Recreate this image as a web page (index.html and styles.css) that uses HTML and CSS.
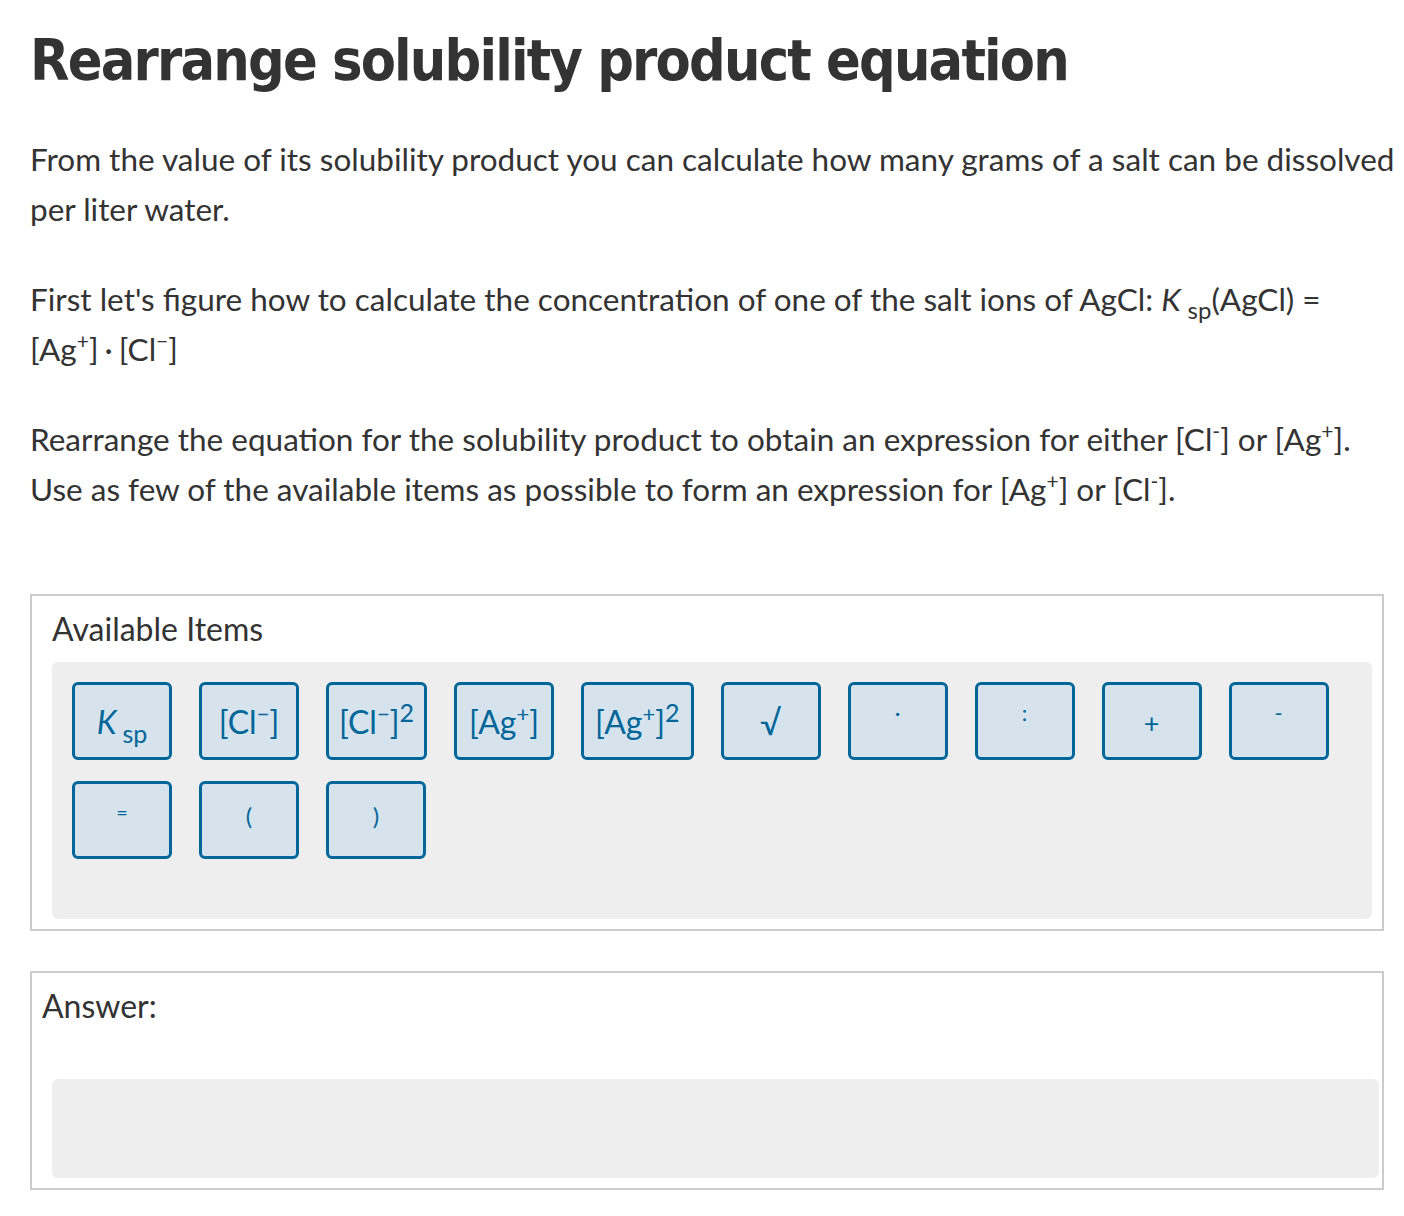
FILE: index.html
```html
<!DOCTYPE html>
<html lang="en">
<head>
<meta charset="utf-8">
<title>Rearrange solubility product equation</title>
<link rel="stylesheet" href="styles.css">
</head>
<body>
<div class="page">
  <h1 class="title">Rearrange solubility product equation</h1>
  <p class="text">From the value of its solubility product you can calculate how many grams of a salt can be dissolved<br>per liter water.</p>
  <p class="text">First let's figure how to calculate the concentration of one of the salt ions of AgCl: <i class="k">K</i><sub class="sp">sp</sub>(AgCl) =<br>[Ag<sup class="sup">+</sup>]<span class="cdot">·</span>[Cl<sup class="sup">−</sup>]</p>
  <p class="text">Rearrange the equation for the solubility product to obtain an expression for either [Cl<sup class="sup">-</sup>] or [Ag<sup class="sup">+</sup>].<br>Use as few of the available items as possible to form an expression for [Ag<sup class="sup">+</sup>] or [Cl<sup class="sup">-</sup>].</p>

  <section class="box items">
    <div class="box-title">Available Items</div>
    <div class="panel">
      <div class="tile"><span class="lbl"><i class="k">K</i><sub class="tsp">sp</sub></span></div>
      <div class="tile"><span class="lbl">[Cl<sup class="tsup">−</sup>]</span></div>
      <div class="tile"><span class="lbl">[Cl<sup class="tsup">−</sup>]<sup class="tpow">2</sup></span></div>
      <div class="tile"><span class="lbl">[Ag<sup class="tsup">+</sup>]</span></div>
      <div class="tile tile-wide"><span class="lbl">[Ag<sup class="tsup">+</sup>]<sup class="tpow">2</sup></span></div>
      <div class="tile"><span class="sqrt">√</span></div>
      <div class="tile"><span class="op op-high">·</span></div>
      <div class="tile"><span class="op op-high">:</span></div>
      <div class="tile"><span class="op op-plus">+</span></div>
      <div class="tile"><span class="op op-high">-</span></div>
      <div class="tile"><span class="op op-eq">=</span></div>
      <div class="tile"><span class="op op-paren">(</span></div>
      <div class="tile"><span class="op op-paren">)</span></div>
    </div>
  </section>

  <section class="box answer">
    <div class="answer-label">Answer:</div>
    <div class="answer-panel"></div>
  </section>
</div>
</body>
</html>
```

FILE: styles.css
```css
html, body {
  margin: 0;
  padding: 0;
  background: #ffffff;
}

body {
  color: #333333;
  font-family: Lato, "Open Sans", "Liberation Sans", sans-serif;
}

.page {
  padding: 24px 20px 20px 30px;
}

.title {
  font-family: "DejaVu Sans Condensed", "DejaVu Sans", sans-serif;
  font-stretch: condensed;
  font-weight: bold;
  font-size: 57px;
  line-height: 72px;
  margin: 0 0 38px 0;
  letter-spacing: -1.8px;
  color: #333333;
}

.text {
  font-size: 31.5px;
  line-height: 50px;
  margin: 0 -20px 40px 0;
  white-space: nowrap;
}

.k {
  font-style: italic;
}

.sp {
  font-size: 24px;
  vertical-align: -8px;
  line-height: 0;
  margin-left: 7px;
}

.sup {
  font-size: 21px;
  vertical-align: 12px;
  line-height: 0;
}

.cdot {
  margin: 0 6px;
}

.box {
  border: 2px solid #cccccc;
}

.items {
  margin-top: 80px;
  padding: 12px 10px 10px 20px;
}

.box-title {
  font-size: 32px;
  line-height: 42px;
  margin-bottom: 12px;
}

.panel {
  background: #eeeeee;
  border-radius: 6px;
  padding: 20px 20px 60px 20px;
  display: flex;
  flex-wrap: wrap;
  gap: 21px 27px;
}

.tile {
  box-sizing: border-box;
  min-width: 100px;
  height: 78px;
  padding: 0 10px;
  border: 3px solid #006699;
  border-radius: 6px;
  background: #d6e3ec;
  color: #006699;
  font-size: 32px;
  display: flex;
  align-items: center;
  justify-content: center;
  white-space: nowrap;
}

.tile-wide {
  padding: 0 11px;
}

.lbl {
  line-height: 1;
  position: relative;
  top: 1px;
}

.tsp {
  font-size: 25px;
  vertical-align: -9px;
  line-height: 0;
  margin-left: 6px;
}

.tsup {
  font-size: 22px;
  vertical-align: 12px;
  line-height: 0;
}

.tpow {
  font-size: 25px;
  vertical-align: 12px;
  line-height: 0;
}

.sqrt {
  font-size: 34px;
}

.op {
  font-size: 22px;
}

.op-plus {
  font-size: 27px;
  position: relative;
  top: 1px;
}

.op-high {
  position: relative;
  top: -9px;
}

.op-eq {
  font-size: 20px;
  position: relative;
  top: -8px;
}

.op-paren {
  font-size: 24px;
  position: relative;
  top: -5px;
}

.answer {
  margin-top: 40px;
  padding: 12px 3px 10px 10px;
}

.answer-label {
  font-size: 32px;
  line-height: 42px;
}

.answer-panel {
  margin: 52px 0 0 10px;
  height: 99px;
  background: #eeeeee;
  border-radius: 6px;
}
```
